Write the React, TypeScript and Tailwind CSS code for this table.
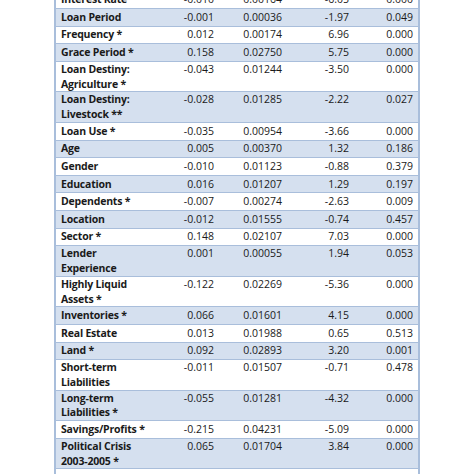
type Row = {
  label: string[];
  coef: string;
  se: string;
  z: string;
  p: string;
};

const rows: Row[] = [
  { label: ["Interest Rate"], coef: "-0.010", se: "0.00164", z: "-6.05", p: "0.000" },
  { label: ["Loan Period"], coef: "-0.001", se: "0.00036", z: "-1.97", p: "0.049" },
  { label: ["Frequency *"], coef: "0.012", se: "0.00174", z: "6.96", p: "0.000" },
  { label: ["Grace Period *"], coef: "0.158", se: "0.02750", z: "5.75", p: "0.000" },
  { label: ["Loan Destiny:", "Agriculture *"], coef: "-0.043", se: "0.01244", z: "-3.50", p: "0.000" },
  { label: ["Loan Destiny:", "Livestock **"], coef: "-0.028", se: "0.01285", z: "-2.22", p: "0.027" },
  { label: ["Loan Use *"], coef: "-0.035", se: "0.00954", z: "-3.66", p: "0.000" },
  { label: ["Age"], coef: "0.005", se: "0.00370", z: "1.32", p: "0.186" },
  { label: ["Gender"], coef: "-0.010", se: "0.01123", z: "-0.88", p: "0.379" },
  { label: ["Education"], coef: "0.016", se: "0.01207", z: "1.29", p: "0.197" },
  { label: ["Dependents *"], coef: "-0.007", se: "0.00274", z: "-2.63", p: "0.009" },
  { label: ["Location"], coef: "-0.012", se: "0.01555", z: "-0.74", p: "0.457" },
  { label: ["Sector *"], coef: "0.148", se: "0.02107", z: "7.03", p: "0.000" },
  { label: ["Lender", "Experience"], coef: "0.001", se: "0.00055", z: "1.94", p: "0.053" },
  { label: ["Highly Liquid", "Assets *"], coef: "-0.122", se: "0.02269", z: "-5.36", p: "0.000" },
  { label: ["Inventories *"], coef: "0.066", se: "0.01601", z: "4.15", p: "0.000" },
  { label: ["Real Estate"], coef: "0.013", se: "0.01988", z: "0.65", p: "0.513" },
  { label: ["Land *"], coef: "0.092", se: "0.02893", z: "3.20", p: "0.001" },
  { label: ["Short-term", "Liabilities"], coef: "-0.011", se: "0.01507", z: "-0.71", p: "0.478" },
  { label: ["Long-term", "Liabilities *"], coef: "-0.055", se: "0.01281", z: "-4.32", p: "0.000" },
  { label: ["Savings/Profits *"], coef: "-0.215", se: "0.04231", z: "-5.09", p: "0.000" },
  { label: ["Political Crisis", "2003-2005 *"], coef: "0.065", se: "0.01704", z: "3.84", p: "0.000" },
  { label: [""], coef: "", se: "", z: "", p: "" },
];

export default function App() {
  return (
    <div className="w-[474px] h-[474px] overflow-hidden bg-white font-['Open_Sans',sans-serif] text-[10.5px] text-[#1a1a1a]">
      <div className="ml-[54px] w-[366px] -mt-[8.6px] border-x-2 border-[#a9bedb]">
        {rows.map((r, i) => (
          <div
            key={i}
            className={`flex items-center border-b border-[#a9bedb] ${
              r.label.length > 1 ? "h-[30.6px]" : "h-[17.6px]"
            } ${i % 2 === 1 ? "bg-[#d5e0ef]" : "bg-white"}`}
          >
            <div className="grid w-full grid-cols-[96px_68px_68px_67px_1fr] items-start leading-[14.8px]">
              <div className="pl-[5px] font-bold tracking-[-0.2px] whitespace-nowrap">
                {r.label.map((l, j) => (
                  <div key={j}>{l}</div>
                ))}
              </div>
              <div className="text-right pr-[6px]">{r.coef}</div>
              <div className="text-right pr-[6px]">{r.se}</div>
              <div className="text-right pr-[6px]">{r.z}</div>
              <div className="text-right pr-[5px]">{r.p}</div>
            </div>
          </div>
        ))}
      </div>
    </div>
  );
}
